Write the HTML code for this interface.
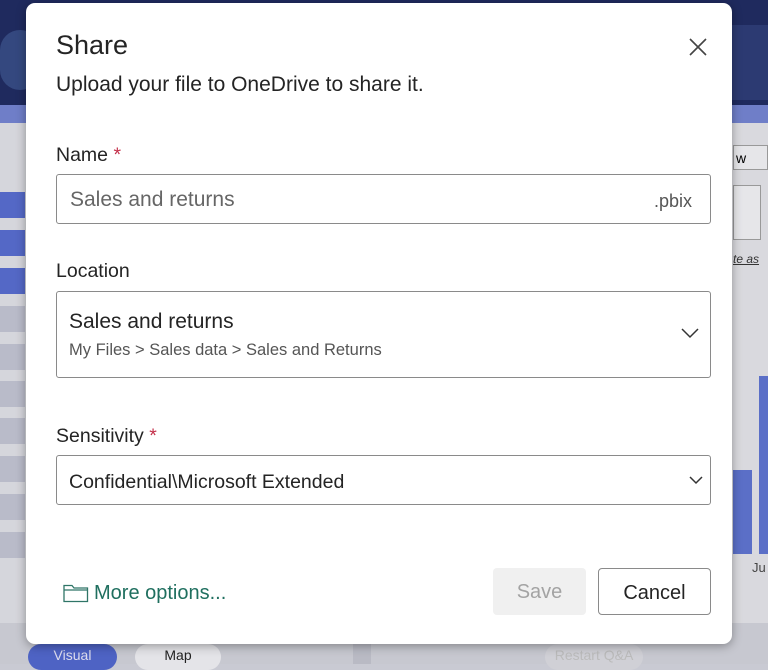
<!DOCTYPE html>
<html><head><meta charset="utf-8"><style>
*{margin:0;padding:0;box-sizing:border-box}
body{width:768px;height:664px;overflow:hidden;position:relative;font-family:"Liberation Sans",sans-serif;background:#c9cad3}
.a{position:absolute}
.dlg{left:26px;top:3px;width:706px;height:641px;background:#fff;border-radius:9px;box-shadow:0 2px 10px rgba(0,0,0,.35)}
.t{color:#242424;white-space:nowrap}
.box{border:1px solid #8a8a8a;border-radius:3px;background:#fff}
</style></head><body>
<div class="a" style="left:0;top:0;width:768px;height:105px;background:#1f2a5e"></div>
<div class="a" style="left:0;top:30px;width:40px;height:60px;border-radius:20px;background:#34487f"></div>
<div class="a" style="left:732px;top:25px;width:36px;height:75px;background:#2c3a72"></div>
<div class="a" style="left:0;top:105px;width:768px;height:18px;background:#6f7ec8"></div>
<div class="a" style="left:0;top:123px;width:768px;height:500px;background:#d5d6dc"></div>
<div class="a" style="left:0;top:192px;width:25px;height:26px;background:#5468c6"></div>
<div class="a" style="left:0;top:230px;width:25px;height:26px;background:#5468c6"></div>
<div class="a" style="left:0;top:268px;width:25px;height:26px;background:#5468c6"></div>
<div class="a" style="left:0;top:306px;width:25px;height:26px;background:#b9bbc9"></div>
<div class="a" style="left:0;top:344px;width:25px;height:26px;background:#b9bbc9"></div>
<div class="a" style="left:0;top:381px;width:25px;height:26px;background:#b9bbc9"></div>
<div class="a" style="left:0;top:418px;width:25px;height:26px;background:#b9bbc9"></div>
<div class="a" style="left:0;top:456px;width:25px;height:26px;background:#b9bbc9"></div>
<div class="a" style="left:0;top:494px;width:25px;height:26px;background:#b9bbc9"></div>
<div class="a" style="left:0;top:532px;width:25px;height:26px;background:#b9bbc9"></div>
<div class="a" style="left:732px;top:123px;width:36px;height:500px;background:#d9d9de"></div>
<div class="a" style="left:733px;top:145px;width:35px;height:25px;background:#e6e6e9;border:1px solid #999;font-size:14px;padding:4px 0 0 2px">w</div>
<div class="a" style="left:733px;top:185px;width:28px;height:55px;background:#e6e6e9;border:1px solid #999"></div>
<div class="a" style="left:733px;top:252px;font-size:12px;font-style:italic;text-decoration:underline;color:#333">te as</div>
<div class="a" style="left:733px;top:470px;width:19px;height:84px;background:#5b6fc7"></div>
<div class="a" style="left:759px;top:376px;width:9px;height:178px;background:#5b6fc7"></div>
<div class="a" style="left:752px;top:560px;font-size:13px;color:#444">Ju</div>
<div class="a" style="left:0;top:623px;width:768px;height:41px;background:#c7c8d0"></div>
<div class="a" style="left:28px;top:644px;width:89px;height:26px;border-radius:13px;background:#4e63c4;color:#dde;font-size:14px;text-align:center;padding-top:3px">Visual</div>
<div class="a" style="left:135px;top:644px;width:86px;height:26px;border-radius:13px;background:#e4e4e8;color:#222;font-size:14px;text-align:center;padding-top:3px">Map</div>
<div class="a" style="left:353px;top:623px;width:18px;height:41px;background:#b9bac4"></div>
<div class="a" style="left:545px;top:644px;width:98px;height:26px;border-radius:13px;background:#d0d0d6;color:#bbb;font-size:14px;text-align:center;padding-top:3px">Restart Q&amp;A</div>

<div class="a dlg"></div>
<div class="a t" style="left:56px;top:30px;font-size:27px">Share</div>
<svg class="a" style="left:688px;top:37px" width="20" height="20" viewBox="0 0 20 20"><path d="M2 2L18 18M18 2L2 18" stroke="#444" stroke-width="1.6"/></svg>
<div class="a t" style="left:56px;top:73px;font-size:21px">Upload your file to OneDrive to share it.</div>

<div class="a t" style="left:56px;top:144px;font-size:19.5px">Name <span style="color:#c4314b">*</span></div>
<div class="a box" style="left:56px;top:174px;width:655px;height:50px"></div>
<div class="a t" style="left:70px;top:188px;font-size:21px;color:#666">Sales and returns</div>
<div class="a t" style="left:654px;top:191px;font-size:18px;color:#555">.pbix</div>

<div class="a t" style="left:56px;top:260px;font-size:19.5px">Location</div>
<div class="a box" style="left:56px;top:291px;width:655px;height:87px"></div>
<div class="a t" style="left:69px;top:310px;font-size:21px">Sales and returns</div>
<div class="a t" style="left:69px;top:341px;font-size:16.5px;color:#555">My Files &gt; Sales data &gt; Sales and Returns</div>
<svg class="a" style="left:681px;top:327px" width="18" height="12" viewBox="0 0 18 12"><path d="M1 2L9 10L17 2" fill="none" stroke="#333" stroke-width="1.5"/></svg>

<div class="a t" style="left:56px;top:425px;font-size:19.5px">Sensitivity <span style="color:#c4314b">*</span></div>
<div class="a box" style="left:56px;top:455px;width:655px;height:50px"></div>
<div class="a t" style="left:69px;top:471px;font-size:19.5px">Confidential\Microsoft Extended</div>
<svg class="a" style="left:689px;top:475px" width="14" height="10" viewBox="0 0 14 10"><path d="M1 2L7 8L13 2" fill="none" stroke="#333" stroke-width="1.5"/></svg>

<svg class="a" style="left:63px;top:583px" width="26" height="20" viewBox="0 0 26 20"><path d="M1 2.5H9L11 5H24.5V18.5H1Z M1 7H24.5" fill="none" stroke="#2f7567" stroke-width="1.3"/></svg>
<div class="a t" style="left:94px;top:582px;font-size:20px;color:#1f6f5f">More options...</div>
<div class="a" style="left:493px;top:568px;width:93px;height:47px;background:#f0f0f0;border-radius:4px;color:#a3a3a3;font-size:20px;text-align:center;padding-top:13px">Save</div>
<div class="a" style="left:598px;top:568px;width:113px;height:47px;border:1px solid #8a8a8a;border-radius:4px;color:#242424;font-size:20px;text-align:center;padding-top:13px">Cancel</div>
</body></html>
